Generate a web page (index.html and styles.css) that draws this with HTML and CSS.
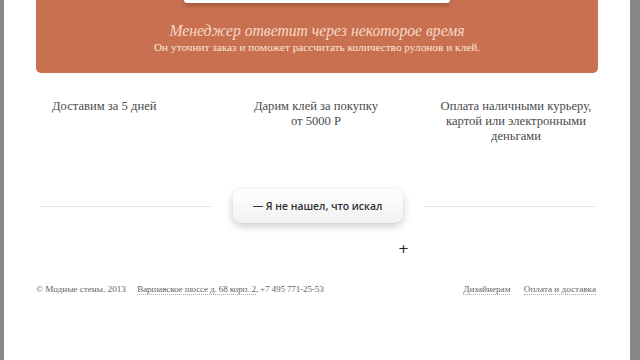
FILE: index.html
```html
<!DOCTYPE html>
<html>
<head>
    <title>Модные стены</title>
    <meta charset="UTF-8"/>
    <link rel="stylesheet" href="styles.css">
</head>
<body>
    <div class="page">
        <div class="promo">
            <div class="promo-card"></div>
            <h2 class="promo-title">Менеджер ответит через некоторое время</h2>
            <div class="promo-text">Он уточнит заказ и поможет рассчитать количество рулонов и клей.</div>
        </div>

        <div class="features">
            <div class="feature feature-left">Доставим за 5 дней</div>
            <div class="feature feature-mid">Дарим клей за покупку<br />от 5000 Р</div>
            <div class="feature feature-right">Оплата наличными курьеру,<br />картой или электронными<br />деньгами</div>
        </div>

        <div class="notfound">
            <div class="line"></div>
            <button class="notfound-button" type="button">— Я не нашел, что искал</button>
            <div class="line"></div>
        </div>

        <div class="cursor">+</div>

        <div class="footer">
            <div class="footer-left">
                <span>© Модные стены, 2013</span>
                <span class="address"><a href="#">Варшавское шоссе д. 68 корп. 2</a>, +7 495 771-25-53</span>
            </div>
            <div class="footer-right">
                <a href="#">Дизайнерам</a>
                <a href="#">Оплата и доставка</a>
            </div>
        </div>
    </div>
</body>
</html>
```

FILE: styles.css
```css
body {
    margin: 0;
    background-color: #878787;
    font-family: "Liberation Serif", serif;
}
.page {
    position: relative;
    margin: 0 10px 0 4px;
    height: 360px;
    background-color: #ffffff;
    overflow: hidden;
}
.promo {
    margin: 0 32px;
    height: 73px;
    background-color: #c8704f;
    border-radius: 0 0 5px 5px;
    text-align: center;
}
.promo-card {
    width: 266px;
    height: 3px;
    margin: 0 auto;
    background-color: #ffffff;
    border-radius: 0 0 4px 4px;
    box-shadow: 0 2px 4px rgba(60, 20, 10, 0.45);
}
.promo-title {
    margin: 18px 0 0 0;
    font-size: 15.7px;
    line-height: 19px;
    font-style: italic;
    font-weight: normal;
    color: #f6d9c8;
}
.promo-text {
    font-size: 11.3px;
    line-height: 14px;
    color: #fbe6da;
}
.features {
    display: grid;
    grid-template-columns: 200px 200px 1fr;
    margin-top: 26px;
    height: 90px;
    font-size: 12.6px;
    line-height: 15px;
    color: #4a4a4a;
}
.feature-left {
    padding-left: 48px;
}
.feature-mid {
    text-align: center;
    padding-left: 24px;
}
.feature-right {
    text-align: center;
    padding-right: 2px;
}
.notfound {
    display: flex;
    align-items: center;
    gap: 22px;
    padding: 0 35px 0 36px;
}
.line {
    flex: 1;
    height: 1px;
    background-color: #e2e2e2;
}
.notfound-button {
    width: 170px;
    height: 34px;
    border: none;
    border-radius: 9px;
    background: linear-gradient(#ffffff, #f1f1f1);
    box-shadow: 0 3px 8px rgba(0, 0, 0, 0.22);
    font-family: "Open Sans", sans-serif;
    font-weight: 600;
    font-size: 10.4px;
    color: #2e2e2e;
    cursor: pointer;
}
.cursor {
    position: absolute;
    left: 394px;
    top: 241px;
    font-family: "DejaVu Sans", sans-serif;
    font-size: 13px;
    color: #222222;
}
.footer {
    display: flex;
    justify-content: space-between;
    margin-top: 61px;
    padding: 0 34px 0 32px;
    font-size: 9.2px;
    color: #666666;
}
.footer-left span {
    margin-right: 9px;
}
.footer-left .address {
    letter-spacing: -0.18px;
}
.footer a {
    color: #666666;
    text-decoration: none;
    border-bottom: 1px dotted #aaaaaa;
}
.footer-right a {
    margin-left: 11px;
}
```
